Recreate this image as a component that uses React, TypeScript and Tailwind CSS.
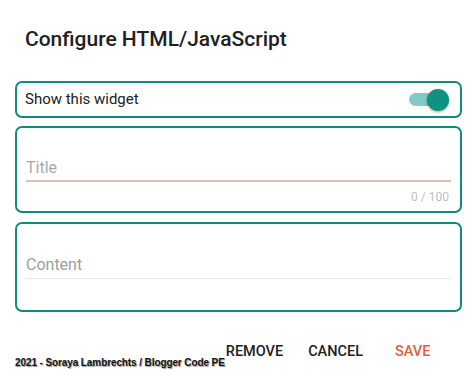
import React from 'react';

export default function App() {
  return (
    <div className="w-[474px] h-[387px] bg-white overflow-hidden font-['Roboto',sans-serif]">
      <h1 className="pl-[25px] pt-[26px] text-[21px] leading-[26px] font-medium text-[#202124]">
        Configure HTML/JavaScript
      </h1>

      <div className="ml-[15px] mr-[12px] mt-[29px] flex flex-col">
        {/* Show widget */}
        <div className="h-[37px] border-2 border-[#16897b] rounded-[7px] flex items-center justify-between pl-[8px] pr-[15px]">
          <span className="text-[15px] text-[#222]">Show this widget</span>
          <div className="relative w-[36px] h-[13px] rounded-full bg-[#80cbc4]">
            <div className="absolute -right-[4px] -top-[4px] w-[22px] h-[22px] rounded-full bg-[#0f9282] shadow-[0_1px_3px_rgba(0,0,0,0.35)]" />
          </div>
        </div>

        {/* Title */}
        <div className="mt-[8px] h-[87px] border-2 border-[#16897b] rounded-[7px] px-[9px] pt-[28px]">
          <div className="text-[16px] leading-[24px] text-[#a9a9a9] border-b-2 border-[#dfbfb1]">Title</div>
          <div className="text-right pr-[2px] text-[12px] leading-[14px] mt-[8px] text-[#c0c0c0]">0 / 100</div>
        </div>

        {/* Content */}
        <div className="mt-[9px] h-[90px] border-2 border-[#16897b] rounded-[7px] px-[9px] pt-[29px]">
          <div className="text-[16px] leading-[24px] text-[#9e9e9e] pb-[1px] border-b border-[#e8e8e8]">Content</div>
        </div>
      </div>

      <div className="flex items-start pl-[15px] pt-[31px]">
        <span className="mt-[14px] text-[10px] leading-[12px] tracking-[-0.1px] font-bold font-['Liberation_Sans',Arial,sans-serif] text-[#111] [text-shadow:1px_1px_1px_#999]">
          2021 - Soraya Lambrechts / Blogger Code PE
        </span>
        <span className="ml-[1px] text-[14.5px] leading-[17px] font-medium text-[#202124]">REMOVE</span>
        <span className="ml-[25px] text-[14.5px] leading-[17px] font-medium text-[#202124]">CANCEL</span>
        <span className="ml-[32px] text-[14.5px] leading-[17px] font-medium text-[#e2603b]">SAVE</span>
      </div>
    </div>
  );
}
